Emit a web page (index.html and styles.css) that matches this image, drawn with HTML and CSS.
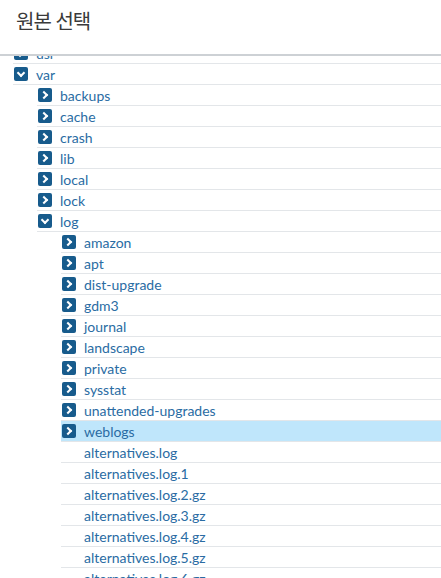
FILE: index.html
```html
<!DOCTYPE html>
<html lang="ko">
<head>
<meta charset="utf-8">
<link rel="stylesheet" href="styles.css">
</head>
<body>
<div class="dialog">
  <header class="head"><h1 class="title">원본 선택</h1></header>
  <div class="tree">
    <ul class="level level1">
      <li><div class="row"><span class="tog closed"></span><span class="name">usr</span></div></li>
      <li>
        <div class="row"><span class="tog open"></span><span class="name">var</span></div>
        <ul class="level">
          <li><div class="row"><span class="tog closed"></span><span class="name">backups</span></div></li>
          <li><div class="row"><span class="tog closed"></span><span class="name">cache</span></div></li>
          <li><div class="row"><span class="tog closed"></span><span class="name">crash</span></div></li>
          <li><div class="row"><span class="tog closed"></span><span class="name">lib</span></div></li>
          <li><div class="row"><span class="tog closed"></span><span class="name">local</span></div></li>
          <li><div class="row"><span class="tog closed"></span><span class="name">lock</span></div></li>
          <li>
            <div class="row"><span class="tog open"></span><span class="name">log</span></div>
            <ul class="level">
              <li><div class="row"><span class="tog closed"></span><span class="name">amazon</span></div></li>
              <li><div class="row"><span class="tog closed"></span><span class="name">apt</span></div></li>
              <li><div class="row"><span class="tog closed"></span><span class="name">dist-upgrade</span></div></li>
              <li><div class="row"><span class="tog closed"></span><span class="name">gdm3</span></div></li>
              <li><div class="row"><span class="tog closed"></span><span class="name">journal</span></div></li>
              <li><div class="row"><span class="tog closed"></span><span class="name">landscape</span></div></li>
              <li><div class="row"><span class="tog closed"></span><span class="name">private</span></div></li>
              <li><div class="row"><span class="tog closed"></span><span class="name">sysstat</span></div></li>
              <li><div class="row"><span class="tog closed"></span><span class="name">unattended-upgrades</span></div></li>
              <li><div class="row selected"><span class="tog closed"></span><span class="name">weblogs</span></div></li>
              <li><div class="row file"><span class="name">alternatives.log</span></div></li>
              <li><div class="row file"><span class="name">alternatives.log.1</span></div></li>
              <li><div class="row file"><span class="name">alternatives.log.2.gz</span></div></li>
              <li><div class="row file"><span class="name">alternatives.log.3.gz</span></div></li>
              <li><div class="row file"><span class="name">alternatives.log.4.gz</span></div></li>
              <li><div class="row file"><span class="name">alternatives.log.5.gz</span></div></li>
              <li><div class="row file"><span class="name">alternatives.log.6.gz</span></div></li>
              <li><div class="row file"><span class="name">alternatives.log.7.gz</span></div></li>
            </ul>
          </li>
        </ul>
      </li>
    </ul>
  </div>
</div>
</body>
</html>
```
FILE: styles.css
```css
html, body {
  margin: 0;
  padding: 0;
  background: #fff;
}
.dialog {
  width: 441px;
  height: 578px;
  display: flex;
  flex-direction: column;
  overflow: hidden;
  font-family: "Lato", "Open Sans", sans-serif;
}
.head {
  flex: none;
  border-bottom: 2px solid #cdd1d5;
  box-sizing: border-box;
  height: 56px;
  padding: 6px 16px 0;
}
.title {
  margin: 0;
  font-family: "Noto Sans CJK KR", "Noto Sans", sans-serif;
  font-weight: 400;
  font-size: 20px;
  letter-spacing: -1px;
  line-height: 29px;
  color: #3a3a3a;
}
.tree {
  flex: 1;
  overflow: hidden;
}
.level {
  list-style: none;
  margin: 0;
  padding: 0 0 0 24px;
}
.level1 {
  padding-left: 13px;
  margin-top: -13px;
}
.row {
  height: 20px;
  border-bottom: 1px solid #e3e6e9;
  display: flex;
  align-items: center;
  gap: 8px;
  padding-left: 1px;
}
.row.selected {
  background: #bfe6fb;
}
.row.file {
  padding-left: 23px;
}
.tog {
  width: 14px;
  height: 14px;
  border-radius: 2px;
  background: #175b8c;
  flex: none;
  position: relative;
}
.tog::after {
  content: "";
  position: absolute;
  width: 4px;
  height: 4px;
  border-right: 2.5px solid #fff;
  border-bottom: 2.5px solid #fff;
}
.tog.closed::after {
  left: 3px;
  top: 3.75px;
  transform: rotate(-45deg);
}
.tog.open::after {
  left: 3.75px;
  top: 3px;
  transform: rotate(45deg);
}
.name {
  font-size: 14px;
  color: #2a6ca3;
  line-height: 20px;
  padding-top: 1px;
  white-space: nowrap;
}
```
